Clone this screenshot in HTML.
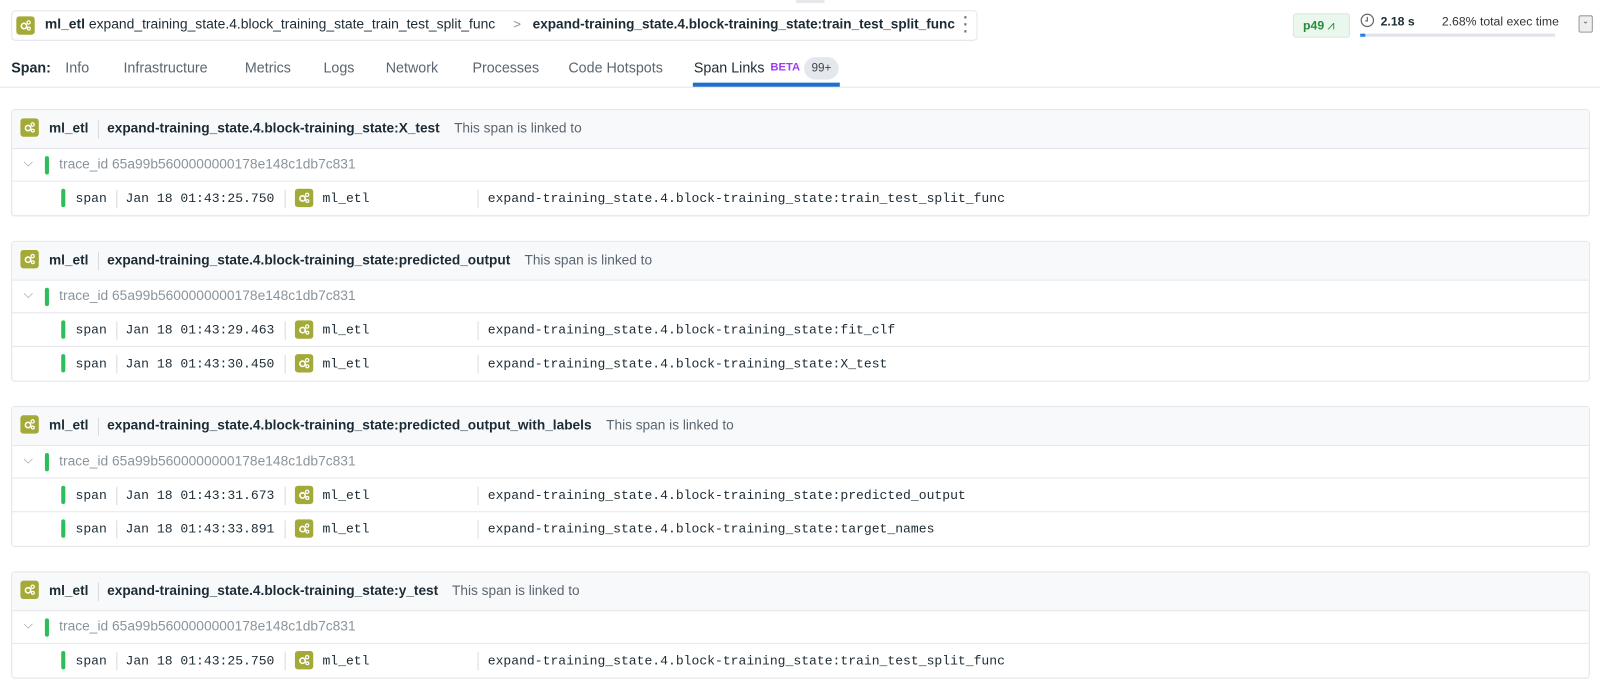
<!DOCTYPE html>
<html><head><meta charset="utf-8"><style>
*{box-sizing:border-box;margin:0;padding:0}
body{width:1600px;height:692px;background:#fff;font-family:"Liberation Sans",sans-serif;font-size:13px;color:#1c2b34;position:relative;overflow:hidden}
#w{position:absolute;left:0;top:0;width:1568px;height:680px;transform:scale(1.0204);transform-origin:0 0}
.abs{position:absolute}
.ico{position:absolute;width:18px;height:18px;border-radius:3px;background:#a3aa38;display:flex;align-items:center;justify-content:center}
.bc{left:11px;top:10px;width:947px;height:30px;border:1px solid #e3e6ea;border-radius:4px}
.tabs span{position:absolute;top:58px;color:#5b6670;font-size:14px}
.card{position:absolute;left:11px;width:1547px;border:1px solid #e0e3e8;border-radius:3px;background:#fff}
.hd{height:38px;background:#f8f9fb;border-bottom:1px solid #e4e7eb;position:relative;font-size:13.4px}
.tr{height:32px;border-bottom:1px solid #e4e7eb;position:relative;color:#8a949c;font-size:13.5px}
.row{height:33px;border-bottom:1px solid #e4e7eb;position:relative;font-family:"Liberation Mono",monospace;font-size:12.8px}
.row:last-child{border-bottom:none}
.bar{position:absolute;width:4px;height:18px;background:#2dbe5a;border-radius:2px}
.sep{position:absolute;width:1px;height:18px;background:#d8dce0}
.t{position:absolute;white-space:nowrap}
</style></head><body><div id="w">
<div class="abs" style="left:780px;top:0;width:28px;height:3px;background:#e6e8ec"></div>
<div class="abs bc">
 <div class="ico" style="left:4px;top:5px"><svg width="12" height="12" viewBox="0 0 12 12"><circle cx="4.5" cy="6.5" r="2.6" fill="none" stroke="#fff" stroke-width="1.6"/><circle cx="9" cy="3" r="1.6" fill="none" stroke="#fff" stroke-width="1.2"/><circle cx="9.2" cy="9" r="1.4" fill="none" stroke="#fff" stroke-width="1.2"/></svg></div>
 <span class="t" style="left:32px;top:5px;font-size:13.6px"><b>ml_etl</b> expand_training_state.4.block_training_state_train_test_split_func</span>
 <span class="t" style="left:491px;top:5px;color:#8a949c">&gt;</span>
 <span class="t" style="left:510px;top:5px;font-weight:bold;font-size:13.3px">expand-training_state.4.block-training_state:train_test_split_func</span>
 <span class="t" style="left:932px;top:3px;color:#777;font-weight:bold;font-size:15px;line-height:7px">·<br>·<br>·</span>
</div>
<div class="abs" style="left:1267px;top:13px;width:56px;height:24px;background:#e9f7ec;border:1px solid #d2ecd8;border-radius:3px;color:#2a8a3e;font-weight:bold;font-size:12px;padding:4px 0 0 9px">p49 <span style="font-weight:normal">⩘</span></div>
<svg class="abs" style="left:1333px;top:13px" width="14" height="14"><circle cx="7" cy="7" r="6" fill="none" stroke="#666" stroke-width="1.2"/><path d="M7 3.5V7.5H5" fill="none" stroke="#666" stroke-width="1.2"/></svg>
<span class="t" style="left:1353px;top:14px;font-weight:bold;font-size:12px">2.18 s</span>
<span class="t" style="left:1413px;top:14px;font-size:12px;color:#333">2.68% total exec time</span>
<div class="abs" style="left:1333px;top:33px;width:191px;height:3px;background:#e0e4ea"></div>
<div class="abs" style="left:1333px;top:33px;width:5px;height:3px;background:#2a80dd"></div>
<div class="abs" style="left:1547px;top:15px;width:14px;height:17px;border:1px solid #999;border-radius:2px;background:#eee;font-size:8px;text-align:center;color:#555">⌄</div>
<div class="tabs">
 <span style="left:11px;color:#1c2b34;font-weight:bold">Span:</span>
 <span style="left:64px">Info</span><span style="left:121px">Infrastructure</span><span style="left:240px">Metrics</span><span style="left:317px">Logs</span><span style="left:378px">Network</span><span style="left:463px">Processes</span><span style="left:557px">Code Hotspots</span>
 <span style="left:680px;color:#1c2b34">Span Links</span>
 <span style="left:755px;top:60px;color:#a13cf0;font-size:11px;font-weight:bold">BETA</span>
</div>
<div class="abs" style="left:788px;top:56px;width:34px;height:22px;background:#e4e7ee;border-radius:11px;font-size:11.5px;color:#444;text-align:center;line-height:22px">99+</div>
<div class="abs" style="left:0;top:85px;width:1568px;height:1px;background:#e4e7eb"></div>
<div class="abs" style="left:679px;top:81px;width:144px;height:4px;background:#1f6fce"></div>
<div id="c"></div>
</div>
<script>
const cards=[
[107,"expand-training_state.4.block-training_state:X_test",[["Jan 18 01:43:25.750","expand-training_state.4.block-training_state:train_test_split_func"]]],
[236,"expand-training_state.4.block-training_state:predicted_output",[["Jan 18 01:43:29.463","expand-training_state.4.block-training_state:fit_clf"],["Jan 18 01:43:30.450","expand-training_state.4.block-training_state:X_test"]]],
[398,"expand-training_state.4.block-training_state:predicted_output_with_labels",[["Jan 18 01:43:31.673","expand-training_state.4.block-training_state:predicted_output"],["Jan 18 01:43:33.891","expand-training_state.4.block-training_state:target_names"]]],
[560,"expand-training_state.4.block-training_state:y_test",[["Jan 18 01:43:25.750","expand-training_state.4.block-training_state:train_test_split_func"]]]];
const ico=(l,t)=>`<div class="ico" style="left:${l}px;top:${t}px"><svg width="12" height="12" viewBox="0 0 12 12"><circle cx="4.5" cy="6.5" r="2.6" fill="none" stroke="#fff" stroke-width="1.6"/><circle cx="9" cy="3" r="1.6" fill="none" stroke="#fff" stroke-width="1.2"/><circle cx="9.2" cy="9" r="1.4" fill="none" stroke="#fff" stroke-width="1.2"/></svg></div>`;
let h="";
for(const [y,name,rows] of cards){
 h+=`<div class="card" style="top:${y}px"><div class="hd">${ico(8,8)}<span class="t" style="left:36px;top:10px;font-weight:bold">ml_etl</span><div class="sep" style="left:84px;top:10px"></div><span class="t" style="left:93px;top:10px;font-weight:bold">${name}</span><span class="t" style="top:10px;color:#5b6670"></span></div>
 <div class="tr"><span class="t" style="left:11px;top:6px;font-size:12px">⌵</span><div class="bar" style="left:32px;top:7px"></div><span class="t" style="left:46px;top:7px">trace_id 65a99b5600000000178e148c1db7c831</span></div>`;
 for(const [d,n] of rows){
  h+=`<div class="row"><div class="bar" style="left:48px;top:7px"></div><span class="t" style="left:62px;top:9px">span</span><div class="sep" style="left:102px;top:8px"></div><span class="t" style="left:111px;top:9px">${d}</span><div class="sep" style="left:267px;top:8px"></div>${ico(277,7)}<span class="t" style="left:304px;top:9px">ml_etl</span><div class="sep" style="left:456px;top:8px"></div><span class="t" style="left:466px;top:9px">${n}</span></div>`;
 }
 h+=`</div>`;
}
document.getElementById("c").innerHTML=h;
document.querySelectorAll(".hd").forEach(hd=>{const s=hd.querySelectorAll(".t");const nm=s[1];const l=nm.offsetLeft+nm.offsetWidth+14;s[2].style.left=l+"px";s[2].textContent="This span is linked to";});
</script>
</body></html>
